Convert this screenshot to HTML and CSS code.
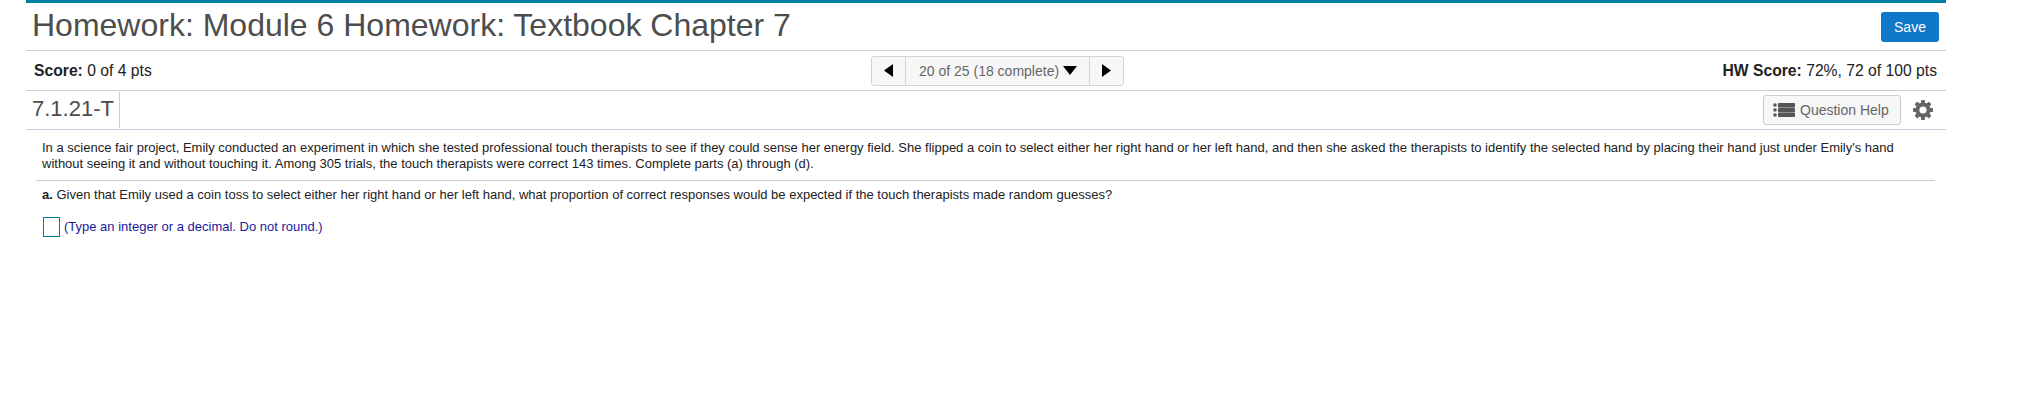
FILE: index.html
```html
<!DOCTYPE html>
<html>
<head>
    <title>Homework</title>
    <link rel="stylesheet" href="styles.css">
</head>
<body>
    <div class="container">
        <div class="title-bar">
            <h1>Homework: Module 6 Homework: Textbook Chapter 7</h1>
            <button class="save">Save</button>
        </div>
        <div class="score-bar">
            <p class="score"><b>Score:</b> 0 of 4 pts</p>
            <div class="pager">
                <span class="pager-btn">
                    <svg width="9" height="13" viewBox="0 0 9 13"><path d="M9 0V13L0 6.5Z"/></svg>
                </span>
                <span class="pager-label">20 of 25 (18 complete)
                    <svg width="14" height="9" viewBox="0 0 14 9"><path d="M0 0H14L7 9Z"/></svg>
                </span>
                <span class="pager-btn">
                    <svg width="9" height="13" viewBox="0 0 9 13"><path d="M0 0V13L9 6.5Z"/></svg>
                </span>
            </div>
            <p class="score hw"><b>HW Score:</b> 72%, 72 of 100 pts</p>
        </div>
        <div class="question-bar">
            <div class="question-id">7.1.21-T</div>
            <div class="tools">
                <button class="help">
                    <svg width="22" height="14" viewBox="0 0 22 14" fill="#555">
                        <circle cx="2" cy="2" r="1.8"/>
                        <circle cx="2" cy="7" r="1.8"/>
                        <circle cx="2" cy="12" r="1.8"/>
                        <rect x="5" y="0" width="17" height="4.4" rx="1"/>
                        <rect x="5" y="4.8" width="17" height="4.4" rx="1"/>
                        <rect x="5" y="9.6" width="17" height="4.4" rx="1"/>
                    </svg>
                    Question Help
                </button>
                <svg class="gear" width="20" height="20" viewBox="0 0 20 20" fill="#666">
                    <circle cx="10" cy="10" r="5.6" fill="none" stroke="#666" stroke-width="4"/>
                    <rect x="8" y="0" width="4" height="5" rx="0.8"/>
                    <rect x="8" y="0" width="4" height="5" rx="0.8" transform="rotate(45 10 10)"/>
                    <rect x="8" y="0" width="4" height="5" rx="0.8" transform="rotate(90 10 10)"/>
                    <rect x="8" y="0" width="4" height="5" rx="0.8" transform="rotate(135 10 10)"/>
                    <rect x="8" y="0" width="4" height="5" rx="0.8" transform="rotate(180 10 10)"/>
                    <rect x="8" y="0" width="4" height="5" rx="0.8" transform="rotate(225 10 10)"/>
                    <rect x="8" y="0" width="4" height="5" rx="0.8" transform="rotate(270 10 10)"/>
                    <rect x="8" y="0" width="4" height="5" rx="0.8" transform="rotate(315 10 10)"/>
                </svg>
            </div>
        </div>
        <div class="question">
            <p class="statement">In a science fair project, Emily conducted an experiment in which she tested professional touch therapists to see if they could sense her energy field. She flipped a coin to select either her right hand or her left hand, and then she asked the therapists to identify the selected hand by placing their hand just under Emily's hand without seeing it and without touching it. Among 305 trials, the touch therapists were correct 143 times. Complete parts (a) through (d).</p>
            <p class="part"><b>a.</b> Given that Emily used a coin toss to select either her right hand or her left hand, what proportion of correct responses would be expected if the touch therapists made random guesses?</p>
            <div class="answer">
                <span class="answer-box"></span>
                <span class="hint">(Type an integer or a decimal. Do not round.)</span>
            </div>
        </div>
    </div>
</body>
</html>
```

FILE: styles.css
```css
body {
    margin: 0;
    background-color: #fff;
    font-family: "Liberation Sans", Arial, sans-serif;
    color: #222;
}

p {
    margin: 0;
}

.container {
    width: 1920px;
    margin-left: 26px;
    border-top: 3px solid #007fa3;
}

.title-bar {
    display: flex;
    justify-content: space-between;
    align-items: center;
    height: 47px;
    padding: 0 7px 0 6px;
    border-bottom: 1px solid #ccc9dc;
}

h1 {
    margin: 0 0 3px;
    font-size: 32px;
    font-weight: normal;
    color: #4d4d4d;
}

.save {
    width: 58px;
    height: 30px;
    padding: 0;
    font-family: inherit;
    font-size: 14px;
    color: #fff;
    background-color: #0f78c9;
    border: none;
    border-radius: 3px;
}

.score-bar {
    display: grid;
    grid-template-columns: 837px auto 1fr;
    align-items: center;
    height: 39px;
    padding: 0 9px 0 8px;
    border-bottom: 1px solid #ccc9dc;
}

.score {
    font-size: 15.7px;
    color: #222;
}

.hw {
    text-align: right;
}

.pager {
    display: flex;
    height: 28px;
    background-color: #f7f7f7;
    border: 1px solid #d4d4d4;
    border-radius: 3px;
}

.pager-btn {
    display: flex;
    align-items: center;
    justify-content: center;
    width: 33px;
}

.pager-label {
    display: flex;
    align-items: center;
    gap: 4px;
    padding: 0 12px 0 13px;
    font-size: 14px;
    color: #666;
    border-left: 1px solid #d4d4d4;
    border-right: 1px solid #d4d4d4;
}

.question-bar {
    display: flex;
    justify-content: space-between;
    height: 38px;
    border-bottom: 1px solid #ccc9dc;
}

.question-id {
    margin: 1px 0;
    padding: 0 5px 0 6px;
    line-height: 34px;
    font-size: 22px;
    color: #4d4d4d;
    border-right: 1px solid #ccc9dc;
}

.tools {
    display: flex;
    align-items: center;
    gap: 12px;
    padding-right: 13px;
}

.help {
    display: flex;
    align-items: center;
    gap: 5px;
    width: 138px;
    height: 30px;
    padding: 0 9px;
    font-family: inherit;
    font-size: 14px;
    color: #666;
    background-color: #f7f7f7;
    border: 1px solid #ccc;
    border-radius: 3px;
}

.question {
    padding: 10px 11px 0 10px;
    font-size: 13px;
    line-height: 16px;
}

.statement {
    padding: 0 0 8px 6px;
    border-bottom: 1px solid #ccc;
}

.part {
    margin-top: 6px;
    padding-left: 6px;
}

.answer {
    display: flex;
    align-items: center;
    gap: 4px;
    margin-top: 14px;
    padding-left: 7px;
}

.answer-box {
    width: 15px;
    height: 18px;
    border: 1px solid #007fa3;
}

.hint {
    color: #1a1a9c;
}
```
